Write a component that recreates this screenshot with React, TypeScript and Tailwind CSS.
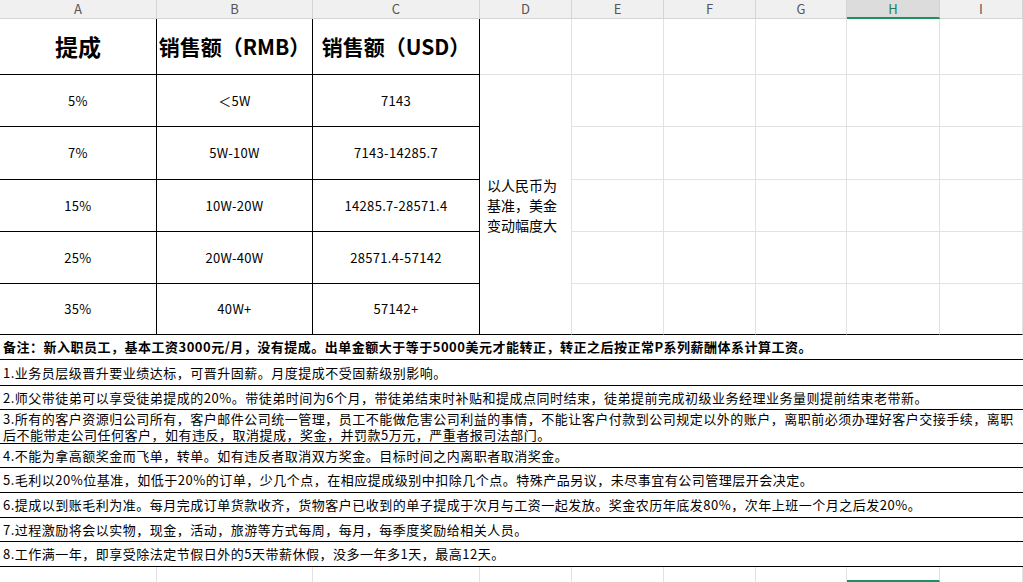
import React from "react";

const cols = ["A", "B", "C", "D", "E", "F", "G", "H", "I"];
const font = { fontFamily: '"Noto Sans CJK SC", "Liberation Sans", sans-serif' } as React.CSSProperties;

const rows: [string, string, string][] = [
  ["5%", "＜5W", "7143"],
  ["7%", "5W-10W", "7143-14285.7"],
  ["15%", "10W-20W", "14285.7-28571.4"],
  ["25%", "20W-40W", "28571.4-57142"],
  ["35%", "40W+", "57142+"],
];

const notes: { t: string; h: string; b?: boolean }[] = [
  { t: "备注：新入职员工，基本工资3000元/月，没有提成。出单金额大于等于5000美元才能转正，转正之后按正常P系列薪酬体系计算工资。", h: "h-[25px]", b: true },
  { t: "1.业务员层级晋升要业绩达标，可晋升固薪。月度提成不受固薪级别影响。", h: "h-[26px]" },
  { t: "2.师父带徒弟可以享受徒弟提成的20%。带徒弟时间为6个月，带徒弟结束时补贴和提成点同时结束，徒弟提前完成初级业务经理业务量则提前结束老带新。", h: "h-[24px]" },
  { t: "3.所有的客户资源归公司所有，客户邮件公司统一管理，员工不能做危害公司利益的事情，不能让客户付款到公司规定以外的账户，离职前必须办理好客户交接手续，离职后不能带走公司任何客户，如有违反，取消提成，奖金，并罚款5万元，严重者报司法部门。", h: "h-[34px]" },
  { t: "4.不能为拿高额奖金而飞单，转单。如有违反者取消双方奖金。目标时间之内离职者取消奖金。", h: "h-[24px]" },
  { t: "5.毛利以20%位基准，如低于20%的订单，少几个点，在相应提成级别中扣除几个点。特殊产品另议，未尽事宜有公司管理层开会决定。", h: "h-[25px]" },
  { t: "6.提成以到账毛利为准。每月完成订单货款收齐，货物客户已收到的单子提成于次月与工资一起发放。奖金农历年底发80%，次年上班一个月之后发20%。", h: "h-[25px]" },
  { t: "7.过程激励将会以实物，现金，活动，旅游等方式每周，每月，每季度奖励给相关人员。", h: "h-[24px]" },
  { t: "8.工作满一年，即享受除法定节假日外的5天带薪休假，没多一年多1天，最高12天。", h: "h-[25px]" },
];

const rowH = ["h-[52px]", "h-[53px]", "h-[52px]", "h-[52px]", "h-[51px]"];

export default function App() {
  return (
    <div className="w-[1023px] h-[582px] overflow-hidden bg-white text-black" style={font}>
      <div className="grid grid-cols-[157px_156px_167px_92px_92px_92px_91px_93px_83px]">
        {cols.map((c) => (
          <div
            key={c}
            className={`h-[19px] flex items-center justify-center text-[13px] border-r border-b ${
              c === "H" ? "bg-[#dcdcdc] text-[#1e7d52] border-b-2 border-b-[#1e8f5e] border-r-[#d4d4d4]" : "bg-[#f0f0f0] text-[#555] border-[#d4d4d4]"
            }`}
          >
            {c}
          </div>
        ))}
        <div className="h-[56px] flex items-center justify-center border-r border-b border-black text-[23px] font-bold">提成</div>
        <div className="h-[56px] flex items-center justify-center border-r border-b border-black text-[21px] font-bold whitespace-nowrap">销售额（RMB）</div>
        <div className="h-[56px] flex items-center justify-center border-r border-b border-black text-[21px] font-bold whitespace-nowrap">销售额（USD）</div>
        {["D", "E", "F", "G", "H", "I"].map((c) => (
          <div key={c} className="h-[56px] border-r border-b border-[#e2e2e2]" />
        ))}
        <div className="col-span-3 row-span-5 grid grid-cols-[157px_156px_167px]">
          {rows.map((r, i) =>
            r.map((v, j) => (
              <div key={`${i}-${j}`} className={`${rowH[i]} flex items-center justify-center border-r border-b border-black text-[13px] tracking-[0.3px]`}>
                {v}
              </div>
            ))
          )}
        </div>
        <div className="row-span-5 flex items-center justify-center border-r border-b border-r-[#e2e2e2] border-b-black text-[14px] leading-[20px] px-[7px]">
          以人民币为基准，美金变动幅度大
        </div>
        {rows.map((_, i) =>
          ["E", "F", "G", "H", "I"].map((c) => (
            <div key={`${i}${c}`} className={`${rowH[i]} border-r border-b ${i === 4 ? "border-b-black" : "border-b-[#e2e2e2]"} border-r-[#e2e2e2]`} />
          ))
        )}
      </div>
      {notes.map((n, i) => (
        <div
          key={i}
          className={`${n.h} flex items-center border-b border-black px-[3px] text-[13px] tracking-[0.5px] leading-[16px] ${n.b ? "font-bold" : ""}`}
        >
          <span>{n.t}</span>
        </div>
      ))}
      <div className="grid grid-cols-[157px_156px_167px_92px_92px_92px_91px_93px_83px] h-[15px]">
        {cols.map((c) => (
          <div key={c} className={`border-r border-[#e2e2e2] ${c === "H" ? "border-b-2 border-b-[#1e8f5e]" : ""}`} />
        ))}
      </div>
    </div>
  );
}
